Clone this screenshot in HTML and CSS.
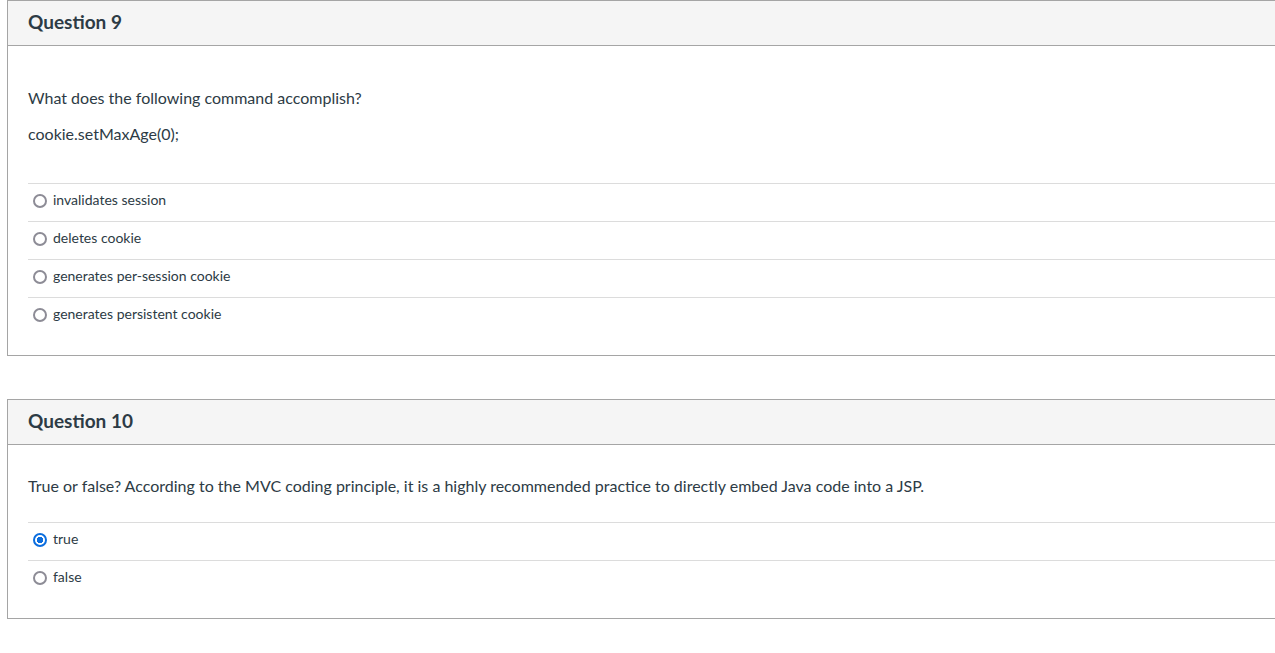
FILE: index.html
```html
<!DOCTYPE html>
<html lang="en">
  <head>
    <meta charset="UTF-8" />
    <meta name="viewport" content="width=device-width, initial-scale=1.0" />
    <title>Quiz</title>
    <link rel="stylesheet" href="styles.css">
  </head>
  <body>
    <div class="quiz">
      <div class="question">
        <div class="header">
          <h2>Question 9</h2>
        </div>
        <div class="text text-p">
          <p>What does the following command accomplish?</p>
          <p>cookie.setMaxAge(0);</p>
        </div>
        <div class="answers">
          <label class="answer"><input type="radio" name="q9"> invalidates session</label>
          <label class="answer"><input type="radio" name="q9"> deletes cookie</label>
          <label class="answer"><input type="radio" name="q9"> generates per-session cookie</label>
          <label class="answer"><input type="radio" name="q9"> generates persistent cookie</label>
        </div>
      </div>

      <div class="question">
        <div class="header">
          <h2>Question 10</h2>
        </div>
        <div class="text">
          True or false? According to the MVC coding principle, it is a highly recommended practice to directly embed Java code into a JSP.
        </div>
        <div class="answers">
          <label class="answer"><input type="radio" name="q10" checked> true</label>
          <label class="answer"><input type="radio" name="q10"> false</label>
        </div>
      </div>
    </div>
  </body>
</html>
```

FILE: styles.css
```css
* {
  margin: 0;
  padding: 0;
  box-sizing: border-box;
}

body {
  font-family: Lato, "Open Sans", sans-serif;
  color: #2d3b45;
  background: #fff;
}

.quiz {
  padding-left: 7px;
  width: 1290px;
}

.question {
  border: 1px solid #a5a5a5;
  border-right: 0;
  margin-bottom: 43px;
  padding-bottom: 20px;
}

.header {
  background: #f5f5f5;
  border-bottom: 1px solid #a5a5a5;
  height: 45px;
  padding: 0 0 4px 20px;
  display: flex;
  align-items: center;
}

.header h2 {
  font-size: 19px;
  font-weight: 700;
}

.text {
  padding: 29px 0 24px 20px;
  font-size: 16px;
  line-height: 24px;
}

.text-p {
  padding-top: 28px;
  padding-bottom: 25px;
}

.text-p p {
  margin: 12px 0;
}

.answers {
  margin-left: 20px;
}

.answer {
  display: flex;
  align-items: center;
  height: 38px;
  border-top: 1px solid #dcdcdc;
  font-size: 14px;
  padding: 0 0 6px 5px;
  gap: 6px;
}

.answer input {
  appearance: none;
  width: 14px;
  height: 14px;
  border: 2px solid #8d8c96;
  border-radius: 50%;
  margin: 3px 0 0;
  background: #fff;
}

.answer input:checked {
  border: 2px solid #0b6dde;
  background: radial-gradient(circle, #0b6dde 0 3px, #fff 3.5px);
}
```
